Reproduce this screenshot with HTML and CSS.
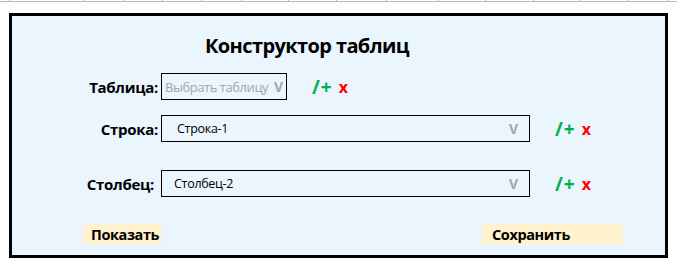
FILE: index.html
```html
<!DOCTYPE html>
<html lang="ru">
<head>
  <meta charset="UTF-8" />
  <title>Конструктор таблиц</title>
  <link rel="stylesheet" href="styles.css">
</head>
<body>
  <div class="sheet-grid">
    <span style="width:10px"></span>
    <span style="width:74px"></span>
    <span style="width:40px"></span>
    <span style="width:39px"></span>
    <span style="width:39px"></span>
    <span style="width:40px"></span>
    <span style="width:47px"></span>
    <span style="width:48px"></span>
    <span style="width:50px"></span>
    <span style="width:52px"></span>
    <span style="width:47px"></span>
    <span style="width:48px"></span>
    <span style="width:47px"></span>
    <span style="width:48px"></span>
    <span style="width:39px"></span>
  </div>

  <div class="panel">
    <h1 class="title">Конструктор таблиц</h1>

    <div class="row row-table">
      <span class="label">Таблица:</span>
      <div class="select select-short">
        <span class="placeholder">Выбрать таблицу</span>
        <span class="arrow">V</span>
      </div>
      <div class="actions"><span class="add">/+</span><span class="del">x</span></div>
    </div>

    <div class="row row-line">
      <span class="label">Строка:</span>
      <div class="select">
        <span class="value">Строка-1</span>
        <span class="arrow">V</span>
      </div>
      <div class="actions"><span class="add">/+</span><span class="del">x</span></div>
    </div>

    <div class="row row-col">
      <span class="label">Столбец:</span>
      <div class="select">
        <span class="value value-col">Столбец-2</span>
        <span class="arrow">V</span>
      </div>
      <div class="actions"><span class="add">/+</span><span class="del">x</span></div>
    </div>

    <div class="buttons">
      <button class="btn btn-show">Показать</button>
      <button class="btn btn-save">Сохранить</button>
    </div>
  </div>
</body>
</html>
```

FILE: styles.css
```css
body {
  margin: 0;
  background: #fff;
  font-family: 'Open Sans', 'Noto Sans', sans-serif;
  color: #000;
  width: 677px;
  height: 270px;
  overflow: hidden;
}

.sheet-grid {
  display: flex;
  height: 1px;
  border-bottom: 1px solid #b8b8b8;
}

.sheet-grid span {
  border-right: 1px solid #b8b8b8;
  box-sizing: border-box;
}

.panel {
  margin: 11px 0 0 9px;
  width: 659px;
  height: 245px;
  box-sizing: border-box;
  border: 3px solid #000;
  background: #eaf5fe;
}

.title {
  margin: 0;
  padding: 17px 0 0 193px;
  font-size: 20px;
  font-weight: 700;
  line-height: 26px;
  letter-spacing: -0.6px;
}

.row {
  display: flex;
  align-items: center;
}

.row-table {
  margin-top: 14px;
}

.row-line {
  margin-top: 15px;
}

.row-col {
  margin-top: 28px;
}

.label {
  width: 146px;
  text-align: right;
  font-size: 15px;
  font-weight: 700;
  letter-spacing: -0.3px;
}

.row-col .label {
  width: 142px;
  margin-right: 4px;
}

.select {
  margin-left: 3px;
  width: 369px;
  height: 27px;
  box-sizing: border-box;
  border: 1px solid #000;
  display: flex;
  align-items: center;
  justify-content: space-between;
  padding: 0 11px 0 15px;
}

.select-short {
  width: 126px;
  padding: 0 3px 0 3px;
}

.placeholder {
  font-size: 13px;
  color: #a6a6a6;
  letter-spacing: -0.45px;
}

.value {
  font-size: 12.5px;
  letter-spacing: -0.3px;
}

.value-col {
  margin-left: -3px;
}

.arrow {
  font-size: 14px;
  font-weight: 700;
  color: #a6a6a6;
}

.actions {
  margin-left: 25px;
  font-size: 19px;
  font-weight: 700;
  display: flex;
  align-items: center;
  gap: 6px;
}

.add {
  color: #00b050;
  letter-spacing: 1px;
}

.del {
  color: #ff0000;
  font-size: 16px;
}

.buttons {
  margin-top: 27px;
  display: flex;
  justify-content: space-between;
  padding: 0 42px 0 71px;
}

.btn {
  font-family: inherit;
  border: none;
  border-radius: 0;
  background: #fff2cc;
  height: 20px;
  padding: 0 0 0 8px;
  font-size: 14.5px;
  font-weight: 700;
  text-align: left;
  letter-spacing: -0.4px;
  color: #000;
}

.btn-show {
  width: 78px;
}

.btn-save {
  width: 141px;
  padding-left: 10px;
}
```
